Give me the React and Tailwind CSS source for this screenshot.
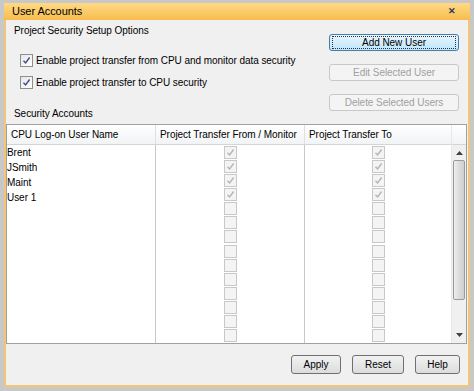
import React from "react";

const users = ["Brent", "JSmith", "Maint", "User 1"];
const rowCount = 14;

const Check = ({ checked, disabled }) => (
  <div
    className={
      "w-[13px] h-[13px] border flex items-center justify-center " +
      (disabled ? "border-[#c8c8c8] bg-[#f4f4f4]" : "border-[#8e8f8f] bg-gradient-to-br from-[#e6e6e6] to-white")
    }
  >
    {checked && (
      <svg width="9" height="9" viewBox="0 0 9 9">
        <path
          d="M1.5 4.8 L3.6 7 L7.6 1.5"
          fill="none"
          stroke={disabled ? "#b4b4b4" : "#3c4f8c"}
          strokeWidth="1.4"
        />
      </svg>
    )}
  </div>
);

const Btn = ({ children, w, disabled, primary }) => (
  <div
    className={
      "h-[17px] rounded-[3px] border flex items-center justify-center " +
      w +
      (primary
        ? " border-[#3c7fb1] bg-gradient-to-b from-[#eaf6fd] to-[#bee6fd] text-black"
        : disabled
        ? " border-[#c8c8c8] bg-[#f4f4f4] text-[#a0a0a0]"
        : " border-[#707070] bg-gradient-to-b from-[#f2f2f2] to-[#dcdcdc] text-black")
    }
  >
    {primary ? (
      <div className="w-[calc(100%-4px)] h-[13px] border border-dotted border-[#333] flex items-center justify-center">
        {children}
      </div>
    ) : (
      children
    )}
  </div>
);

export default function App() {
  return (
    <div
      className="w-[474px] h-[391px] bg-[#c8c8c8] pt-[3px] pl-[4px] text-[10px] leading-[13px] text-black"
      style={{ fontFamily: "Tahoma, 'Liberation Sans', Arial, sans-serif", letterSpacing: "-0.05px" }}
    >
      <div className="w-[466px] h-[384px] flex flex-col border-x-2 border-b-2 border-[#f2c577] bg-[#f0f0f0]">
        {/* Title bar */}
        <div className="h-[17px] -mx-[2px] flex items-center justify-between pl-[8px] pr-[14px] bg-gradient-to-b from-[#ffd985] to-[#f7bd4c] text-[11px]">
          <span>User Accounts</span>
          <span className="text-[9px] font-bold text-[#2b3a5c]">✕</span>
        </div>

        {/* Options */}
        <div className="h-[104px] flex justify-between">
          <div className="pl-[8px] pt-[3px] flex flex-col">
            <div className="h-[14px] flex items-center">Project Security Setup Options</div>
            <div className="mt-[17px] pl-[6px] flex items-center gap-[3px] h-[13px]">
              <Check checked />
              <span>Enable project transfer from CPU and monitor data security</span>
            </div>
            <div className="mt-[9px] pl-[6px] flex items-center gap-[3px] h-[13px]">
              <Check checked />
              <span>Enable project transfer to CPU security</span>
            </div>
            <div className="mt-[18px] h-[13px] flex items-center">Security Accounts</div>
          </div>
          <div className="pt-[14px] pr-[9px] flex flex-col gap-[13px]">
            <Btn w="w-[130px]" primary>Add New User</Btn>
            <Btn w="w-[130px]" disabled>Edit Selected User</Btn>
            <Btn w="w-[130px]" disabled>Delete Selected Users</Btn>
          </div>
        </div>

        {/* Table */}
        <div className="mr-[1px] h-[220px] flex border border-[#a0a0a0] bg-white">
          <div className="flex-1 flex flex-col">
            <div className="h-[20px] flex bg-gradient-to-b from-white to-[#f2f3f5] border-b border-[#d5d5d5]">
              <div className="w-[149px] pl-[4px] flex items-center border-r border-[#e0e0e0]">CPU Log-on User Name</div>
              <div className="w-[149px] pl-[4px] flex items-center border-r border-[#e0e0e0] whitespace-nowrap">Project Transfer From / Monitor</div>
              <div className="flex-1 pl-[4px] flex items-center">Project Transfer To</div>
            </div>
            <div className="flex-1 overflow-hidden flex">
              <div className="w-[149px] border-r border-[#c8c8c8] flex flex-col">
                {users.map((u) => (
                  <div key={u} className="h-[15px] flex items-center">{u}</div>
                ))}
              </div>
              <div className="w-[149px] border-r border-[#c8c8c8] flex flex-col items-center">
                {Array.from({ length: rowCount }).map((_, i) => (
                  <div key={i} className="h-[15px] flex items-center">
                    <Check disabled checked={i < 4} />
                  </div>
                ))}
              </div>
              <div className="flex-1 flex flex-col items-center">
                {Array.from({ length: rowCount }).map((_, i) => (
                  <div key={i} className="h-[15px] flex items-center">
                    <Check disabled checked={i < 4} />
                  </div>
                ))}
              </div>
            </div>
          </div>
          {/* Scrollbar */}
          <div className="w-[15px] flex flex-col bg-[#f0f0f0] border-l border-[#e8e8e8]">
            <div className="h-[20px] bg-gradient-to-b from-white to-[#f2f3f5] border-b border-[#d5d5d5]" />
            <div className="h-[15px] flex items-center justify-center">
              <svg width="7" height="4" viewBox="0 0 7 4"><path d="M0 4 L3.5 0 L7 4 Z" fill="#404040" /></svg>
            </div>
            <div className="mx-[1px] h-[140px] rounded-[2px] border border-[#9a9a9a] bg-gradient-to-r from-[#eeeeee] via-[#dcdcdc] to-[#cfcfcf]" />
            <div className="flex-1" />
            <div className="h-[17px] flex items-center justify-center">
              <svg width="7" height="4" viewBox="0 0 7 4"><path d="M0 0 L7 0 L3.5 4 Z" fill="#404040" /></svg>
            </div>
          </div>
        </div>

        {/* Footer */}
        <div className="flex-1 flex justify-end items-start pt-[11px] pr-[8px] gap-[11px]">
          <div className="w-[50px] h-[19px] rounded-[3px] border border-[#707070] bg-gradient-to-b from-[#f2f2f2] to-[#dcdcdc] flex items-center justify-center">Apply</div>
          <div className="w-[52px] h-[19px] rounded-[3px] border border-[#707070] bg-gradient-to-b from-[#f2f2f2] to-[#dcdcdc] flex items-center justify-center">Reset</div>
          <div className="w-[45px] h-[19px] rounded-[3px] border border-[#707070] bg-gradient-to-b from-[#f2f2f2] to-[#dcdcdc] flex items-center justify-center">Help</div>
        </div>
      </div>
    </div>
  );
}
